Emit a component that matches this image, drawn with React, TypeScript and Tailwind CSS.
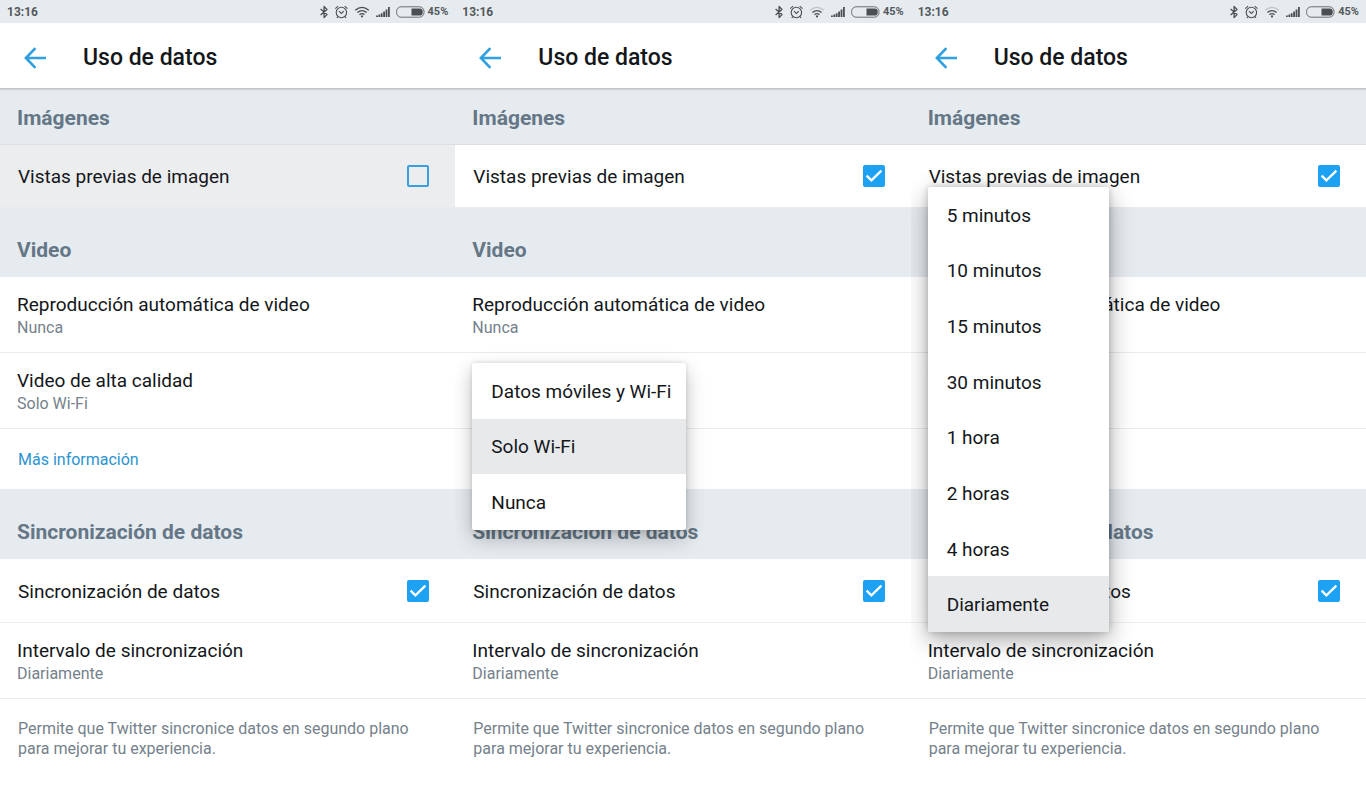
import clsx from "clsx";
import { useState } from "react";
import type { ReactNode } from "react";

interface MenuState {
  options: string[];
  value: string;
}

interface DataUsageScreenProps {
  id: string;
  intervalMenu?: MenuState;
  previews: boolean;
  qualityMenu?: MenuState;
  weakWifi?: boolean;
}

const StatusIcons = ({ weakWifi }: { weakWifi?: boolean }) => (
  <div className="flex items-center gap-[6px]" aria-hidden="true">
    <svg width="9" height="14" viewBox="0 0 9 14" fill="none" stroke="#4b4f52" strokeWidth="1.3">
      <path d="M1.6 4 8 9.6 5.1 12.5V1.5L8 4.4 1.6 10" strokeLinejoin="round" />
    </svg>
    <svg width="14" height="14" viewBox="0 0 14 14" fill="none" stroke="#4b4f52" strokeWidth="1.1">
      <circle cx="7.4" cy="7.5" r="5.2" />
      <path d="M1.3 3.6 4.1 1.2M13.5 3.6 10.7 1.2M3.8 11.6 2.8 13M11 11.6 12 13" />
      <path d="M5 6.2 7.4 8.4 9.8 6.2" />
    </svg>
    <svg width="16" height="12" viewBox="0 0 16 12" fill="none" stroke="#4b4f52" strokeWidth="1.4">
      <path d="M1.2 4.2Q8-1.4 14.8 4.2" opacity={weakWifi ? 0.25 : 1} />
      <path d="M3.4 6.5Q8 2.8 12.6 6.5" />
      <path d="M5.5 8.6Q8 6.6 10.5 8.6" />
      <circle cx="8" cy="10.4" r="1.1" fill="#4b4f52" stroke="none" />
    </svg>
    <svg width="14" height="10" viewBox="0 0 14 10" fill="#4b4f52">
      <path d="M0 8.6h1.8V10H0zM2.4 7.6h1.8V10H2.4zM4.8 6.2h1.8V10H4.8zM7.2 4.4H9V10H7.2zM9.6 2.4h1.8V10H9.6zM12 0h1.8v10H12z" />
    </svg>
    <svg width="29" height="12" viewBox="0 0 29 12">
      <rect x=".6" y=".8" width="27.4" height="10.4" rx="4.6" fill="none" stroke="#6a6e71" />
      <path d="M15.5 2.4h8.4a2.8 2.8 0 0 1 2.8 2.8v1.6a2.8 2.8 0 0 1-2.8 2.8h-8.4z" fill="#4b4f52" />
    </svg>
  </div>
);

const SectionTitle = ({ children, first }: { children: string; first?: boolean }) => (
  <h2
    className={clsx(
      "flex items-center bg-[#e6ebf0] px-[17px] text-[21px] leading-6 font-bold text-[#657786]",
      first ? "h-14 border-b border-[#dcdfe1] pt-0.5" : "h-[70px] pt-4",
    )}
  >
    {children}
  </h2>
);

interface CheckRowProps {
  bordered?: boolean;
  checked: boolean;
  id: string;
  label: string;
  pressed?: boolean;
}

const CheckRow = ({ bordered, checked, id, label, pressed }: CheckRowProps) => {
  const [on, setOn] = useState(checked);

  return (
    <div
      className={clsx(
        "flex items-center justify-between pr-[26px] pl-[18px]",
        pressed && "bg-[#ecedef]",
        bordered ? "h-16 border-b border-[#eeeff0]" : "h-[62px]",
      )}
    >
      <label htmlFor={id} className="pt-0.5 text-[19px] leading-6">
        {label}
      </label>
      <span className="relative size-[22px]">
        <input
          id={id}
          type="checkbox"
          checked={on}
          onChange={() => setOn(!on)}
          className="block size-full appearance-none rounded-xs border-2 border-[#3a9fdf] checked:border-[#1da1f2] checked:bg-[#1da1f2]"
        />
        {on ? (
          <svg
            className="pointer-events-none absolute inset-0"
            viewBox="0 0 22 22"
            fill="none"
            stroke="#fff"
            strokeWidth="2.3"
          >
            <path d="M3.6 10.6 8.4 15.4 18.4 5.6" />
          </svg>
        ) : null}
      </span>
    </div>
  );
};

interface ValueRowProps {
  children?: ReactNode;
  label: string;
  value: string;
}

const ValueRow = ({ children, label, value }: ValueRowProps) => (
  <div className="relative border-b border-[#e9ebec]">
    <button
      type="button"
      className="flex h-[75px] w-full flex-col justify-center px-[17px] pt-0.5 text-left"
    >
      <span className="text-[19px] leading-6">{label}</span>
      <span className="text-base leading-[22px] text-[#75818b]">{value}</span>
    </button>
    {children}
  </div>
);

const OptionMenu = ({ className, options, value }: MenuState & { className: string }) => (
  <ul
    role="listbox"
    className={clsx(
      "absolute left-[17px] z-10 grid auto-rows-fr overflow-hidden rounded-xs bg-white",
      className,
    )}
  >
    {options.map((option) => (
      <li key={option} role="option" aria-selected={option === value}>
        <button
          type="button"
          className={clsx(
            "size-full pt-0.5 pr-[15px] pl-[19px] text-left text-[19px] leading-6",
            option === value && "bg-[#e8e9eb]",
          )}
        >
          {option}
        </button>
      </li>
    ))}
  </ul>
);

const DataUsageScreen = ({
  id,
  intervalMenu,
  previews,
  qualityMenu,
  weakWifi,
}: DataUsageScreenProps) => (
  <section className="min-w-0 flex-1 overflow-hidden bg-white">
    <div className="flex h-[23px] items-center justify-between bg-[#e6ebef] px-[7px] text-xs font-bold text-[#55595c]">
      <span>13:16</span>
      <div className="flex items-center gap-[3px]">
        <StatusIcons weakWifi={weakWifi} />
        <span className="text-[11px] leading-3">45%</span>
      </div>
    </div>
    <header className="relative flex h-[66px] items-center border-b border-[#c3c6ca] px-6 pt-1 shadow-[0_1px_1px_rgba(0,0,0,0.1)]">
      <button type="button" aria-label="Atrás">
        <svg width="22" height="22" viewBox="0 0 22 22" fill="none" stroke="#2f9fe0" strokeWidth="2.6">
          <path d="M22 11H2M11.4 1.2 1.9 11 11.4 20.8" />
        </svg>
      </button>
      <h1 className="ml-[37px] text-[23px] leading-8 font-medium">Uso de datos</h1>
    </header>

    <SectionTitle first>Imágenes</SectionTitle>
    <CheckRow
      id={`${id}-previews`}
      label="Vistas previas de imagen"
      checked={previews}
      pressed={!previews}
    />

    <SectionTitle>Video</SectionTitle>
    <ValueRow label="Reproducción automática de video" value="Nunca" />
    <ValueRow label="Video de alta calidad" value="Solo Wi-Fi">
      {qualityMenu ? (
        <OptionMenu
          {...qualityMenu}
          className="top-[10px] h-[167px] shadow-[0_8px_20px_rgba(0,0,0,0.26),0_0_4px_rgba(0,0,0,0.14)]"
        />
      ) : null}
    </ValueRow>
    <div className="flex h-[60px] items-center px-[18px] pt-0.5">
      <a href="#mas-informacion" className="text-base leading-6 text-[#2b93cf]">
        Más información
      </a>
    </div>

    <SectionTitle>Sincronización de datos</SectionTitle>
    <CheckRow id={`${id}-sync`} label="Sincronización de datos" checked bordered />
    <ValueRow label="Intervalo de sincronización" value="Diariamente">
      {intervalMenu ? (
        <OptionMenu
          {...intervalMenu}
          className="bottom-[66px] h-[445px] w-[181px] shadow-[0_8px_24px_rgba(0,0,0,0.34),0_0_6px_rgba(0,0,0,0.2)]"
        />
      ) : null}
    </ValueRow>
    <p className="px-[18px] pt-5 text-base leading-5 text-[#75818b]">
      Permite que Twitter sincronice datos en segundo plano para mejorar tu experiencia.
    </p>
  </section>
);

const QUALITY_OPTIONS = ["Datos móviles y Wi-Fi", "Solo Wi-Fi", "Nunca"];

const INTERVAL_OPTIONS = [
  "5 minutos",
  "10 minutos",
  "15 minutos",
  "30 minutos",
  "1 hora",
  "2 horas",
  "4 horas",
  "Diariamente",
];

export default function App() {
  return (
    <main className="flex min-h-screen bg-white font-[Roboto,sans-serif] text-[#14171a]">
      <DataUsageScreen id="first" previews={false} />
      <DataUsageScreen
        id="second"
        previews
        weakWifi
        qualityMenu={{ options: QUALITY_OPTIONS, value: "Solo Wi-Fi" }}
      />
      <DataUsageScreen
        id="third"
        previews
        weakWifi
        intervalMenu={{ options: INTERVAL_OPTIONS, value: "Diariamente" }}
      />
    </main>
  );
}
